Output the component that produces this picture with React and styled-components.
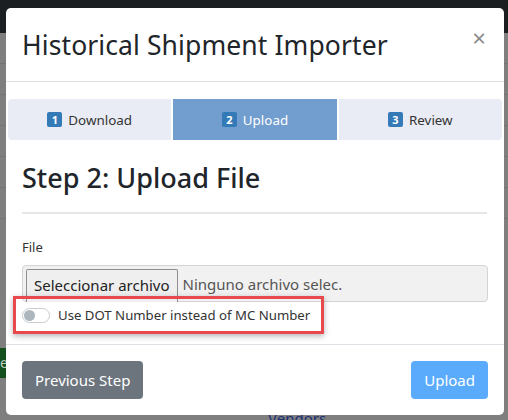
import React from "react";
import styled, { createGlobalStyle } from "styled-components";

const Global = createGlobalStyle`
  html, body { margin: 0; padding: 0; }
  body {
    width: 508px; height: 420px; overflow: hidden;
    font-family: "Noto Sans", "Open Sans", "Liberation Sans", sans-serif;
    background: #7f7f7f;
  }
  #root { height: 420px; }
`;

const Page = styled.div`
  position: relative;
  width: 508px;
  height: 420px;
  background: #7f7f7f;
  overflow: hidden;
`;

const TopBar = styled.div`
  height: 33px;
  background: #1c1f22;
`;

const BgRows = styled.div`
  display: flex;
  flex-direction: column;
`;

const BgRow = styled.div`
  height: ${(p) => p.$h}px;
  border-bottom: 1px solid #747474;
`;

const GreenTag = styled.div`
  position: absolute;
  left: 0;
  top: 348px;
  width: 10px;
  height: 30px;
  background: #14501e;
  color: #b9c9bb;
  font-size: 14px;
  line-height: 30px;
`;

const VendorsLink = styled.div`
  position: absolute;
  left: 268px;
  top: 410px;
  color: #1a2f73;
  font-size: 15px;
  line-height: 16px;
`;

const Modal = styled.div`
  position: absolute;
  left: 6px;
  top: 8px;
  width: 498px;
  height: 407px;
  background: #fff;
  border-radius: 5px;
  display: flex;
  flex-direction: column;
  box-sizing: border-box;
`;

const Header = styled.div`
  height: 74px;
  box-sizing: border-box;
  border-bottom: 1px solid #dee2e6;
  display: flex;
  align-items: center;
  justify-content: space-between;
  padding: 0 18px 0 16px;
`;

const Title = styled.h1`
  margin: 0;
  font-size: 26.5px;
  font-weight: 400;
  color: #212529;
  letter-spacing: 0.1px;
`;

const Close = styled.span`
  font-size: 24px;
  color: #8a8a8a;
  font-weight: 400;
  line-height: 1;
  margin-top: -14px;
`;

const Tabs = styled.div`
  display: grid;
  grid-template-columns: 1fr 1fr 1fr;
  gap: 2px;
  margin: 17px 2px 0;
  border-radius: 4px;
  overflow: hidden;
`;

const Tab = styled.div`
  height: 41px;
  display: flex;
  align-items: center;
  justify-content: center;
  gap: 6px;
  background: ${(p) => (p.$active ? "#729dcf" : "#e9ecf4")};
  color: ${(p) => (p.$active ? "#fff" : "#333")};
  font-size: 13.4px;
`;

const Badge = styled.span`
  display: inline-flex;
  align-items: center;
  justify-content: center;
  width: 15px;
  height: 15px;
  border-radius: 2px;
  background: #337ab7;
  color: #fff;
  font-size: 11px;
  font-weight: 700;
`;

const Body = styled.div`
  padding: 0 16px;
  display: flex;
  flex-direction: column;
`;

const StepTitle = styled.h2`
  margin: 18px 0 0;
  font-size: 27px;
  font-weight: 500;
  color: #212529;
  line-height: 40px;
`;

const Rule = styled.hr`
  margin: 14px 0 0;
  border: 0;
  border-top: 2px solid #e6e6e6;
  width: 465px;
`;

const Label = styled.label`
  margin-top: 23px;
  font-size: 13px;
  color: #333;
  line-height: 20px;
`;

const FileBox = styled.div`
  margin-top: 8px;
  height: 37px;
  box-sizing: border-box;
  border: 1px solid #d4d4d4;
  border-radius: 4px;
  background: #f1f1f1;
  display: flex;
  align-items: flex-start;
  padding: 3px 0 0 3px;
  gap: 5px;
`;

const FileButton = styled.span`
  height: 33px;
  box-sizing: border-box;
  border: 1px solid #8f8f8f;
  border-bottom: 0;
  border-radius: 2px 2px 0 0;
  background: #efefef;
  color: #222;
  font-size: 15px;
  padding: 0 7px;
  display: flex;
  align-items: center;
  padding-bottom: 3px;
`;

const FileText = styled.span`
  font-size: 15px;
  color: #555;
  line-height: 30px;
`;

const SwitchRow = styled.div`
  position: relative;
  display: flex;
  align-items: center;
  gap: 8px;
  height: 26px;
`;

const Highlight = styled.div`
  position: absolute;
  left: -9px;
  top: -6px;
  width: 311px;
  height: 38px;
  border: 3px solid #e8494c;
  box-shadow: 0 2px 6px rgba(0, 0, 0, 0.3);
  box-sizing: border-box;
  pointer-events: none;
`;

const Switch = styled.span`
  position: relative;
  width: 28px;
  height: 15px;
  box-sizing: border-box;
  border: 1px solid #c8cbd0;
  border-radius: 8px;
  background: #fff;
  &::after {
    content: "";
    position: absolute;
    left: 1px;
    top: 1px;
    width: 11px;
    height: 11px;
    border-radius: 50%;
    background: #adb5bd;
  }
`;

const SwitchText = styled.span`
  font-size: 13.2px;
  color: #333;
`;

const Footer = styled.div`
  margin-top: auto;
  height: 71px;
  box-sizing: border-box;
  border-top: 1px solid #dee2e6;
  display: flex;
  align-items: center;
  justify-content: space-between;
  padding: 0 16px;
`;

const Button = styled.button`
  height: 38px;
  border: 0;
  border-radius: 4px;
  padding: 0 13px;
  font-family: inherit;
  font-size: 15px;
  color: #fff;
  background: ${(p) => (p.$variant === "secondary" ? "#6c757d" : "#5aabfb")};
`;

export default function App() {
  return (
    <Page>
      <Global />
      <TopBar />
      <BgRows>
        <BgRow $h={30} />
        <BgRow $h={30} />
        <BgRow $h={30} />
        <BgRow $h={30} />
        <BgRow $h={30} />
        <BgRow $h={30} />
      </BgRows>
      <GreenTag>e</GreenTag>
      <VendorsLink>Vendors</VendorsLink>
      <Modal>
        <Header>
          <Title>Historical Shipment Importer</Title>
          <Close>×</Close>
        </Header>
        <Tabs>
          <Tab>
            <Badge>1</Badge>Download
          </Tab>
          <Tab $active>
            <Badge>2</Badge>Upload
          </Tab>
          <Tab>
            <Badge>3</Badge>Review
          </Tab>
        </Tabs>
        <Body>
          <StepTitle>Step 2: Upload File</StepTitle>
          <Rule />
          <Label>File</Label>
          <FileBox>
            <FileButton>Seleccionar archivo</FileButton>
            <FileText>Ninguno archivo selec.</FileText>
          </FileBox>
          <SwitchRow>
            <Highlight />
            <Switch />
            <SwitchText>Use DOT Number instead of MC Number</SwitchText>
          </SwitchRow>
        </Body>
        <Footer>
          <Button $variant="secondary">Previous Step</Button>
          <Button>Upload</Button>
        </Footer>
      </Modal>
    </Page>
  );
}
